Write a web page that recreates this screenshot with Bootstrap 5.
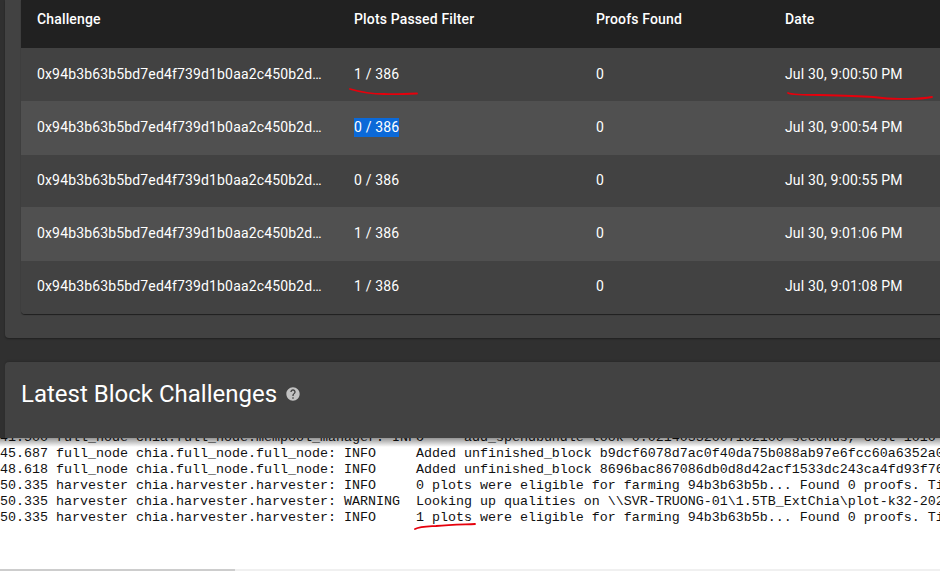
<!DOCTYPE html>
<html lang="en">
<head>
<meta charset="utf-8">
<title>Latest Block Challenges</title>
<link href="https://cdn.jsdelivr.net/npm/bootstrap@5.3.0/dist/css/bootstrap.min.css" rel="stylesheet">
<style>
html, body { height: 100%; }
body { margin: 0; background: #fff; overflow: hidden; position: relative; font-family: Roboto, "Liberation Sans", sans-serif; }
.dark-pane { height: 438px; background: #303030; padding-left: 5px; overflow: hidden; }
.panel { background: #424242; border: 0; border-radius: 0 0 0 4px; color: #fff; margin-right: -40px; }
.panel-table { height: 338px; padding: 0 0 0 16px; box-shadow: 0 1px 2px rgba(0,0,0,.35); }
.panel-title { height: 76px; margin-top: 24px; padding: 16px; border-radius: 4px 0 0 0; box-shadow: 0 -1px 2px rgba(0,0,0,.12); }
.table-wrap { border-radius: 0 0 0 4px; overflow: hidden; box-shadow: 0 1px 1px rgba(0,0,0,.55); height: 314px; }
.chal-table { table-layout: fixed; width: 960px; margin: 0; font-size: 14px; line-height: 20px; letter-spacing: .15px; color: #fff; --bs-table-bg: transparent; --bs-table-color: #fff; border-color: transparent; }
.chal-table th, .chal-table td { padding: 0 16px; vertical-align: top; border: 0; color: #fff; }
.chal-table thead tr { height: 48px; background: #212121; }
.chal-table th { font-weight: 500; padding-top: 9px; }
.chal-table tbody tr:nth-child(1) { height: 53px; background: #424242; }
.chal-table tbody tr:nth-child(2) { height: 54px; background: #505050; }
.chal-table tbody tr:nth-child(3) { height: 52px; background: #424242; }
.chal-table tbody tr:nth-child(4) { height: 54px; background: #505050; }
.chal-table tbody tr:nth-child(5) { height: 53px; background: #424242; }
.chal-table tbody tr:nth-child(1) td, .chal-table tbody tr:nth-child(2) td, .chal-table tbody tr:nth-child(4) td { padding-top: 16px; }
.chal-table tbody tr:nth-child(3) td, .chal-table tbody tr:nth-child(5) td { padding-top: 15px; }
.col-a { width: 317px; } .col-b { width: 242px; } .col-c { width: 189px; }
.picked { background: #0b69d8; display: inline-block; line-height: 19px; margin-top: 1px; }
.heading-line { font-size: 24px; line-height: 32px; font-weight: 400; margin: 0; white-space: nowrap; }
.help-mark { display: block; width: 16px; height: 16px; fill: rgba(255,255,255,.68); }
.log-pane { position: relative; height: 131px; background: #fff; overflow: hidden; }
.log-pane::before { content: ""; position: absolute; left: 0; right: 0; top: 0; height: 9px; background: linear-gradient(rgba(0,0,0,.42), rgba(0,0,0,0)); }
.log-text { margin: -8px 0 0; padding: 0; font: 13.333px/16px "Liberation Mono", "Courier New", monospace; color: #111; white-space: pre; overflow: hidden; }
.scroll-track { height: 2px; background: #f0f0f0; }
.scroll-thumb { width: 235px; height: 2px; background: #cdcdcd; }
.ink { position: absolute; left: 0; top: 0; width: 940px; height: 571px; pointer-events: none; }
.ink path { fill: none; stroke: #e6000c; stroke-width: 1.8; stroke-linecap: round; stroke-linejoin: round; }
</style>
</head>
<body>
<div class="dark-pane">
  <section class="card panel panel-table">
    <div class="table-wrap">
      <table class="table chal-table">
        <thead>
          <tr><th class="col-a">Challenge</th><th class="col-b">Plots Passed Filter</th><th class="col-c">Proofs Found</th><th>Date</th></tr>
        </thead>
        <tbody>
          <tr><td>0x94b3b63b5bd7ed4f739d1b0aa2c450b2d…</td><td>1 / 386</td><td>0</td><td>Jul 30, 9:00:50 PM</td></tr>
          <tr><td>0x94b3b63b5bd7ed4f739d1b0aa2c450b2d…</td><td><span class="picked">0 / 386</span></td><td>0</td><td>Jul 30, 9:00:54 PM</td></tr>
          <tr><td>0x94b3b63b5bd7ed4f739d1b0aa2c450b2d…</td><td>0 / 386</td><td>0</td><td>Jul 30, 9:00:55 PM</td></tr>
          <tr><td>0x94b3b63b5bd7ed4f739d1b0aa2c450b2d…</td><td>1 / 386</td><td>0</td><td>Jul 30, 9:01:06 PM</td></tr>
          <tr><td>0x94b3b63b5bd7ed4f739d1b0aa2c450b2d…</td><td>1 / 386</td><td>0</td><td>Jul 30, 9:01:08 PM</td></tr>
        </tbody>
      </table>
    </div>
  </section>
  <section class="card panel panel-title">
    <div class="d-flex align-items-center gap-2">
      <h2 class="heading-line">Latest Block Challenges</h2>
      <svg class="help-mark" viewBox="0 0 24 24" aria-label="help"><path d="M12 2C6.48 2 2 6.48 2 12s4.48 10 10 10 10-4.48 10-10S17.52 2 12 2zm1 17h-2v-2h2v2zm2.07-7.75l-.9.92C13.45 12.9 13 13.5 13 15h-2v-.5c0-1.1.45-2.1 1.17-2.83l1.24-1.26c.37-.36.59-.86.59-1.41 0-1.1-.9-2-2-2s-2 .9-2 2H8c0-2.21 1.79-4 4-4s4 1.79 4 4c0 .88-.36 1.68-.93 2.25z"/></svg>
    </div>
  </section>
</div>
<div class="log-pane">
<pre class="log-text">41.500 full_node chia.full_node.mempool_manager: INFO     add_spendbundle took 0.02140332007102100 seconds, cost 1010
45.687 full_node chia.full_node.full_node: INFO     Added unfinished_block b9dcf6078d7ac0f40da75b088ab97e6fcc60a6352a0
48.618 full_node chia.full_node.full_node: INFO     Added unfinished_block 8696bac867086db0d8d42acf1533dc243ca4fd93f76
50.335 harvester chia.harvester.harvester: INFO     0 plots were eligible for farming 94b3b63b5b... Found 0 proofs. Ti
50.335 harvester chia.harvester.harvester: WARNING  Looking up qualities on \\SVR-TRUONG-01\1.5TB_ExtChia\plot-k32-202
50.335 harvester chia.harvester.harvester: INFO     1 plots were eligible for farming 94b3b63b5b... Found 0 proofs. Ti</pre>
</div>
<div class="scroll-track"><div class="scroll-thumb"></div></div>
<svg class="ink" viewBox="0 0 940 571" aria-hidden="true">
  <path d="M350 89 C360 92 372 94 384 94 C395 94.500 406 94 417 93.500"/>
  <path d="M788 93 C792 95 806 95 820 95 C840 95.500 858 96 873 97 C885 98.500 895 99 903 98.800 C915 99 925 98.500 932 97"/>
  <path d="M415 529 C420 526.500 428 526.500 436 526 C450 524.500 462 524.500 475 524"/>
</svg>
<script src="https://cdn.jsdelivr.net/npm/bootstrap@5.3.0/dist/js/bootstrap.bundle.min.js"></script>
</body>
</html>
